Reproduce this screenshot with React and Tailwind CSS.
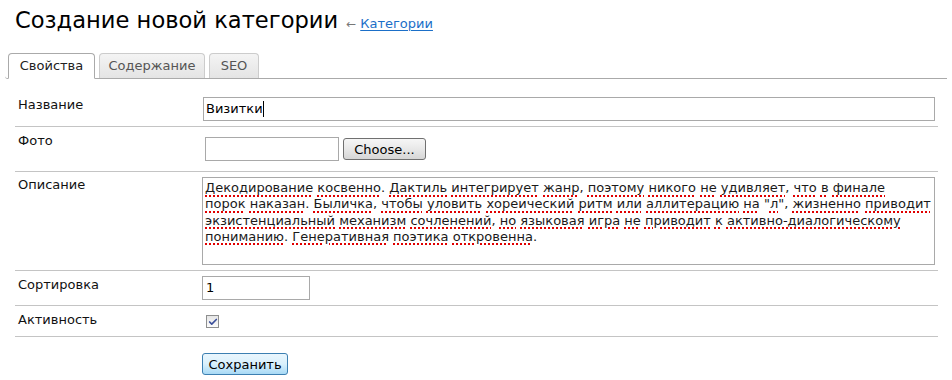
import { Check } from 'lucide-react';

const lines = [
  'Декодирование косвенно. Дактиль интегрирует жанр, поэтому никого не удивляет, что в финале',
  'порок наказан. Быличка, чтобы уловить хореический ритм или аллитерацию на "л", жизненно приводит',
  'экзистенциальный механизм сочленений, но языковая игра не приводит к активно-диалогическому',
  'пониманию. Генеративная поэтика откровенна.',
];

// fake spellcheck: underline every word, leave punctuation alone
const Spelled = ({ text }) => {
  const parts = text.split(/([А-Яа-яЁё-]+)/);
  return parts.map((p, i) =>
    /[А-Яа-яЁё]/.test(p) ? (
      <span
        key={i}
        className="underline decoration-dotted decoration-[#e00000] decoration-[1.5px] underline-offset-[3px]"
      >
        {p}
      </span>
    ) : (
      <span key={i}>{p}</span>
    )
  );
};

const Row = ({ label, labelPad = 'pt-[6px]', children, className = '' }) => (
  <div className="flex border-b border-[#c4c4c4]">
    <div className={`w-[187px] shrink-0 pl-[3px] leading-[16px] ${labelPad}`}>{label}</div>
    <div className={`flex-1 ${className}`}>{children}</div>
  </div>
);

const App = () => {
  return (
    <div className="w-[952px] h-[380px] bg-white px-[5px] pt-[5px] text-[13px] text-[#111] font-['Verdana','DejaVu_Sans',sans-serif] overflow-hidden">
      {/* Heading */}
      <h1 className="ml-[10px] flex items-baseline leading-[30px]">
        <span className="text-[22.6px] text-black">Создание новой категории</span>
        <span className="ml-[8px] text-[12px] text-[#777]">←</span>
        <a href="#" className="ml-[4px] text-[13px] text-[#1b6fc8] underline underline-offset-[2px]">
          Категории
        </a>
      </h1>

      {/* Tabs */}
      <div className="mt-[14px] flex items-end gap-[4px] h-[26px] pl-[3px] border-b border-[#aaaaaa] rounded-bl-[3px]">
        <div className="-mb-px h-[26px] w-[87px] flex items-center justify-center bg-white border border-[#aaaaaa] border-b-white rounded-t-[4px] text-[#222]">
          Свойства
        </div>
        <div className="h-[25px] w-[106px] flex items-center justify-center bg-gradient-to-b from-[#f4f4f4] to-[#e4e4e4] border border-b-0 border-[#cccccc] rounded-t-[4px] text-[#555]">
          Содержание
        </div>
        <div className="h-[25px] w-[50px] flex items-center justify-center bg-gradient-to-b from-[#f4f4f4] to-[#e4e4e4] border border-b-0 border-[#cccccc] rounded-t-[4px] text-[#555]">
          SEO
        </div>
      </div>

      {/* Form */}
      <div className="ml-[10px] mt-[12px] w-[923px]">
        <Row label="Название" className="pt-[6px] pb-[5px]">
          <div className="ml-[1px] w-[732px] h-[24px] border border-[#a9a9a9] bg-white pl-[2px] flex items-center text-black">
            Визитки
            <span className="inline-block w-[1px] h-[16px] bg-black"></span>
          </div>
        </Row>

        <Row label="Фото" className="pt-[10px] pb-[10px] flex items-center">
          <div className="ml-[3px] w-[134px] h-[24px] border border-[#a9a9a9] bg-white"></div>
          <button className="ml-[4px] w-[83px] h-[22px] border border-[#707070] rounded-[3px] bg-gradient-to-b from-[#f6f6f6] via-[#e8e8e8] to-[#d6d6d6] text-black leading-none">
            Choose...
          </button>
        </Row>

        <Row label="Описание" labelPad="pt-[5px]" className="pt-[5px] pb-[5px]">
          <div className="w-[733px] h-[88px] border border-[#a9a9a9] bg-white px-[2px] pt-[2px] leading-[16.3px] text-[#1a1a1a] whitespace-nowrap">
            {lines.map((l, i) => (
              <div key={i}>
                <Spelled text={l} />
              </div>
            ))}
          </div>
        </Row>

        <Row label="Сортировка" className="pt-[5px] pb-[5px]">
          <div className="w-[108px] h-[24px] border border-[#a9a9a9] bg-white pl-[3px] flex items-center text-black">
            1
          </div>
        </Row>

        <Row label="Активность" className="pt-[9px] pb-[8px]">
          <span className="ml-[4px] w-[13px] h-[13px] border border-[#8e8f8f] bg-gradient-to-b from-[#e6e6e6] to-[#fbfbfb] flex items-center justify-center">
            <Check className="w-[10px] h-[10px] text-[#3b4f9a]" strokeWidth={4} />
          </span>
        </Row>

        <div className="pl-[187px] pt-[16px]">
          <button className="w-[86px] h-[22px] border border-[#3c7fb1] rounded-[3px] bg-gradient-to-b from-[#eaf6fd] via-[#d9f0fc] to-[#a7d9f5] text-black leading-none">
            Сохранить
          </button>
        </div>
      </div>
    </div>
  );
};

export default App;
